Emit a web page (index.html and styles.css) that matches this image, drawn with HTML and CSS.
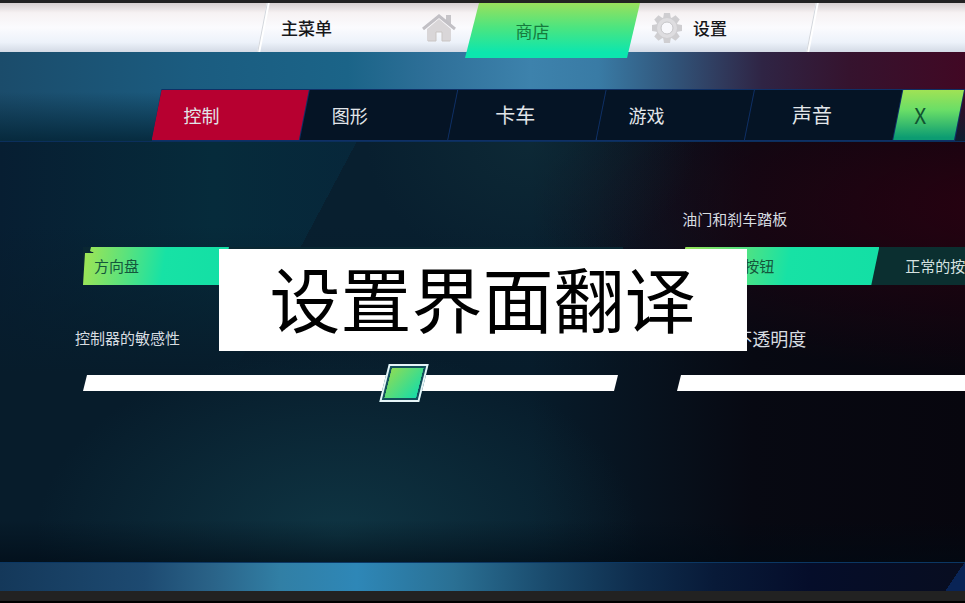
FILE: index.html
```
<!DOCTYPE html>
<html lang="zh-CN">
<head>
    <meta charset="UTF-8">
    <title>设置</title>
    <link rel="stylesheet" href="styles.css">
</head>
<body>
    <div class="game">
        <!-- Main navigation -->
        <nav class="main-nav">
            <span class="nav-space"></span>
            <a class="nav-item nav-menu" href="#menu">
                主菜单
                <svg class="nav-icon home-icon" viewBox="0 0 36 30" aria-hidden="true">
                    <path d="M6 16 18 6 30 16V28H21V19H15V28H6Z" fill="#d9d6d8"/>
                    <path d="M25 2H30V13L25 9Z" fill="#c6c4c8"/>
                    <path d="M2 16 18 3 34 16" fill="none" stroke="#c2c0c5" stroke-width="3"/>
                    <path d="M7 28H15V19H21V28H29" fill="none" stroke="#c9c5c3" stroke-width="1"/>
                </svg>
            </a>
            <a class="nav-item nav-shop" href="#shop">商店</a>
            <a class="nav-item nav-settings" href="#settings">
                <svg class="nav-icon gear-icon" viewBox="0 0 32 32" aria-hidden="true">
                    <g fill="#cfced1">
                        <path d="M12 7 13 1H19L20 7V25L19 31H13L12 25Z"/>
                        <path d="M12 7 13 1H19L20 7V25L19 31H13L12 25Z" transform="rotate(45 16 16)"/>
                        <path d="M12 7 13 1H19L20 7V25L19 31H13L12 25Z" transform="rotate(90 16 16)"/>
                        <path d="M12 7 13 1H19L20 7V25L19 31H13L12 25Z" transform="rotate(135 16 16)"/>
                        <circle cx="16" cy="16" r="11"/>
                    </g>
                    <circle cx="16" cy="16" r="8" fill="none" stroke="#dedde0" stroke-width="4"/>
                    <circle cx="16" cy="16" r="6" fill="#f8f8fc" stroke="#c6c6c9" stroke-width="1"/>
                </svg>
                设置
            </a>
            <span class="nav-space nav-end"></span>
        </nav>

        <!-- Settings tabs -->
        <div class="tab-row">
            <div class="tab-bar">
                <button type="button" class="tab active">控制</button>
                <button type="button" class="tab">图形</button>
                <button type="button" class="tab tab-large">卡车</button>
                <button type="button" class="tab">游戏</button>
                <button type="button" class="tab tab-large">声音</button>
                <button type="button" class="tab close">X</button>
            </div>
        </div>

        <!-- Control settings -->
        <main class="panel">
            <section class="column">
                <div class="label-row"></div>
                <div class="options wheel" role="radiogroup" aria-label="控制器">
                    <label class="option notched"><input type="radio" name="steering" checked>方向盘</label>
                </div>
                <label class="label-row" for="sensitivity">控制器的敏感性</label>
                <input class="slider" type="range" id="sensitivity" min="0" max="100" value="61">
            </section>
            <section class="column pedals">
                <h2 class="label-row" id="pedalsLabel">油门和刹车踏板</h2>
                <div class="options" role="radiogroup" aria-labelledby="pedalsLabel">
                    <label class="option"><input type="radio" name="pedals" checked>按钮</label>
                    <label class="option"><input type="radio" name="pedals">正常的按钮</label>
                </div>
                <label class="label-row label-large" for="opacity">按钮的不透明度</label>
                <input class="slider" type="range" id="opacity" min="0" max="100" value="100">
            </section>
        </main>

        <div class="bottom-bar"></div>
    </div>
    <h1 class="banner">设置界面翻译</h1>
</body>
</html>
```
FILE: styles.css
```
* {
    box-sizing: border-box;
}

body {
    position: relative;
    min-height: 100vh;
    margin: 0;
    padding-bottom: 2px;
    background: #000;
    font-family: "Noto Sans CJK SC", "Noto Sans", sans-serif;
}

button,
input {
    font-family: inherit;
    margin: 0;
}

.game {
    display: flex;
    flex-direction: column;
    min-height: calc(100vh - 2px);
    overflow: hidden;
    border-top: 3px solid #222;
    border-bottom: 10px solid #222;
}

/* Main navigation */
.main-nav {
    display: grid;
    grid-template-columns: 262fr 203fr 162fr 184fr 154fr;
    grid-template-rows: 49px;
    background: linear-gradient(#d6cfd0, #f6f2f3 20%, #fbfbfe 50%, #edf2fa 80%, #d3dae5);
    position: relative;
    z-index: 1;
}

.nav-item {
    display: flex;
    align-items: center;
    color: #17171a;
    font-size: 17px;
    font-weight: 500;
    line-height: 24px;
    text-decoration: none;
}

.nav-menu::before,
.nav-end::before {
    content: "";
    display: block;
    width: 2px;
    height: 49px;
    background: #fff;
    border-left: 1px solid #d3d7dd;
    transform: skewX(-11deg);
}

.nav-menu {
    padding-right: 8px;
}

.nav-menu::before {
    margin-right: 16px;
}

.nav-icon {
    flex: none;
}

.home-icon {
    width: 36px;
    height: 30px;
    margin-left: auto;
}

.gear-icon {
    width: 32px;
    height: 32px;
}

.nav-shop {
    justify-content: center;
    height: 55px;
    margin-right: -13px;
    padding-right: 40px;
    background: linear-gradient(#99e05c, #4be580 45%, #0ce6ae 90%);
    clip-path: polygon(14px 0, 100% 0, calc(100% - 13px) 100%, 0 100%);
    color: #167a3c;
    font-weight: 400;
}

.nav-settings {
    gap: 10px;
    padding-left: 24px;
}

/* Tabs */
.tab-row {
    padding: 37px 0 0 15.7%;
    border-bottom: 1px solid #0b2f5c;
    background:
        linear-gradient(transparent 45%, rgba(2, 34, 51, 0.8) 98%),
        linear-gradient(90deg, #1b4c6b, #1b5c80 20%, #1b6488 36%, #2f7099 45%, #3d82ac 55%, #397ba5 62%, #315378 70%, #2f2444 79%, #35132e 88%, #410824);
}

.tab-bar {
    display: grid;
    grid-template-columns: repeat(5, 148fr) 61fr;
    column-gap: 1px;
    padding: 1px 11px 1px 0;
    background: #0f3066;
    clip-path: polygon(10px 0, 100% 0, calc(100% - 10px) 100%, 0 100%);
}

.tab {
    height: 50px;
    margin-right: -10px;
    padding: 0 0 0 32px;
    border: none;
    background: #051425;
    clip-path: polygon(10px 0, 100% 0, calc(100% - 10px) 100%, 0 100%);
    color: #e2e6ea;
    font-size: 18px;
    line-height: 26px;
    text-align: left;
    cursor: pointer;
}

.tab.active {
    background: #b70030;
}

.tab-large {
    padding-left: 47px;
    font-size: 20px;
}

.close {
    padding-left: 21px;
    background: linear-gradient(#a0e255, #6ade67 40%, #0c9c72 95%);
    color: #105330;
    font-size: 21px;
}

/* Control settings */
.panel {
    flex: 1;
    display: grid;
    grid-template-columns: 62vw 62vw;
    column-gap: 4px;
    align-content: start;
    padding: 65px 0 60px 75px;
    background:
        linear-gradient(transparent 90%, rgba(0, 10, 20, 0.6)),
        radial-gradient(ellipse at 35% 94%, rgba(19, 66, 80, 0.65), transparent 34%),
        radial-gradient(ellipse at 55% 0, rgba(18, 50, 60, 0.5), transparent 22%),
        radial-gradient(ellipse at 106% 15%, rgba(52, 0, 18, 0.75), transparent 34%),
        linear-gradient(90deg, transparent 55%, #070912 78%, #07060e),
        linear-gradient(transparent 20%, #071c2b 55%),
        linear-gradient(118deg, transparent 30%, #081f2f 30%),
        linear-gradient(90deg, #071e32, #062b3b 22%, #07263a 40%);
}

.label-row {
    display: block;
    height: 24px;
    margin: 0;
    color: #d8dde1;
    font-size: 15px;
    font-weight: 400;
    line-height: 24px;
}

.label-large {
    font-size: 18px;
}

.pedals .label-row {
    padding-left: 5px;
}

.pedals .label-large {
    padding-left: 3px;
}

.options {
    display: flex;
    width: 56vw;
    height: 38px;
    margin: 16px 0 41px;
    background: #0b2f30;
    clip-path: polygon(8px 0, 100% 0, calc(100% - 8px) 100%, 0 100%);
}

.wheel {
    margin-left: 8px;
    background: #0a2732;
    clip-path: none;
}

.option {
    display: flex;
    align-items: center;
    flex: 0 0 202px;
    color: #d5e2e0;
    font-size: 15px;
    line-height: 22px;
    cursor: pointer;
    white-space: nowrap;
}

.option input {
    appearance: none;
    width: 0;
    height: 0;
}

.option:has(input:checked) {
    background: linear-gradient(100deg, #a3e452, #5de27b 28%, #17e2a5 55%, #13dfa5);
    clip-path: polygon(8px 0, 100% 0, calc(100% - 8px) 100%, 0 100%);
    color: #14573c;
}

.pedals .option {
    padding-left: 26px;
}

.pedals .option:has(input:checked) {
    padding-left: 67px;
}

.option.notched:has(input:checked) {
    flex-basis: 146px;
    padding-left: 11px;
    clip-path: polygon(8px 0, 100% 0, calc(100% - 8px) 100%, 0 100%, 2px 6px, 10px 6px, 11px 4px, 17px 3px, 15px 5px, 9px 5px, 7px 4px);
}

/* The whole slider is slanted so that track and thumb share one angle */
.slider {
    appearance: none;
    display: block;
    width: 55vw;
    height: 38px;
    margin: 14px 0 0 10px;
    background: none;
    transform: skewX(-14deg);
    cursor: pointer;
}

.pedals .slider {
    margin-left: 2px;
}

.slider::-webkit-slider-runnable-track {
    height: 16px;
    background: #fff;
}

.slider::-webkit-slider-thumb {
    appearance: none;
    width: 40px;
    height: 38px;
    margin-top: -11px;
    padding: 2px;
    border: 2px solid #e6f5f8;
    background: linear-gradient(125deg, #8bdc57, #16dda8) content-box, #12505c;
}

/* Bottom edge */
.bottom-bar {
    height: 29px;
    border-top: 1px solid #0b3763;
    background:
        linear-gradient(124deg, transparent 98%, #092456 98%),
        linear-gradient(90deg, #14385a, #1d4a71 15%, #2a6388 22%, #317fa5 29%, #2e87b7 37%, #2a7094 47%, #19496b 57%, #0e2c4c 66%, #081a38 74%, #050d2a 84%, #080d20);
}

/* Title banner over the screen */
.banner {
    position: absolute;
    top: calc(50% - 2px);
    left: 50%;
    transform: translate(-50%, -50%);
    margin: 0;
    padding: 0 51px 8px;
    background: #fff;
    color: #000;
    font-size: 71px;
    font-weight: 400;
    line-height: 94px;
    white-space: nowrap;
}
```
